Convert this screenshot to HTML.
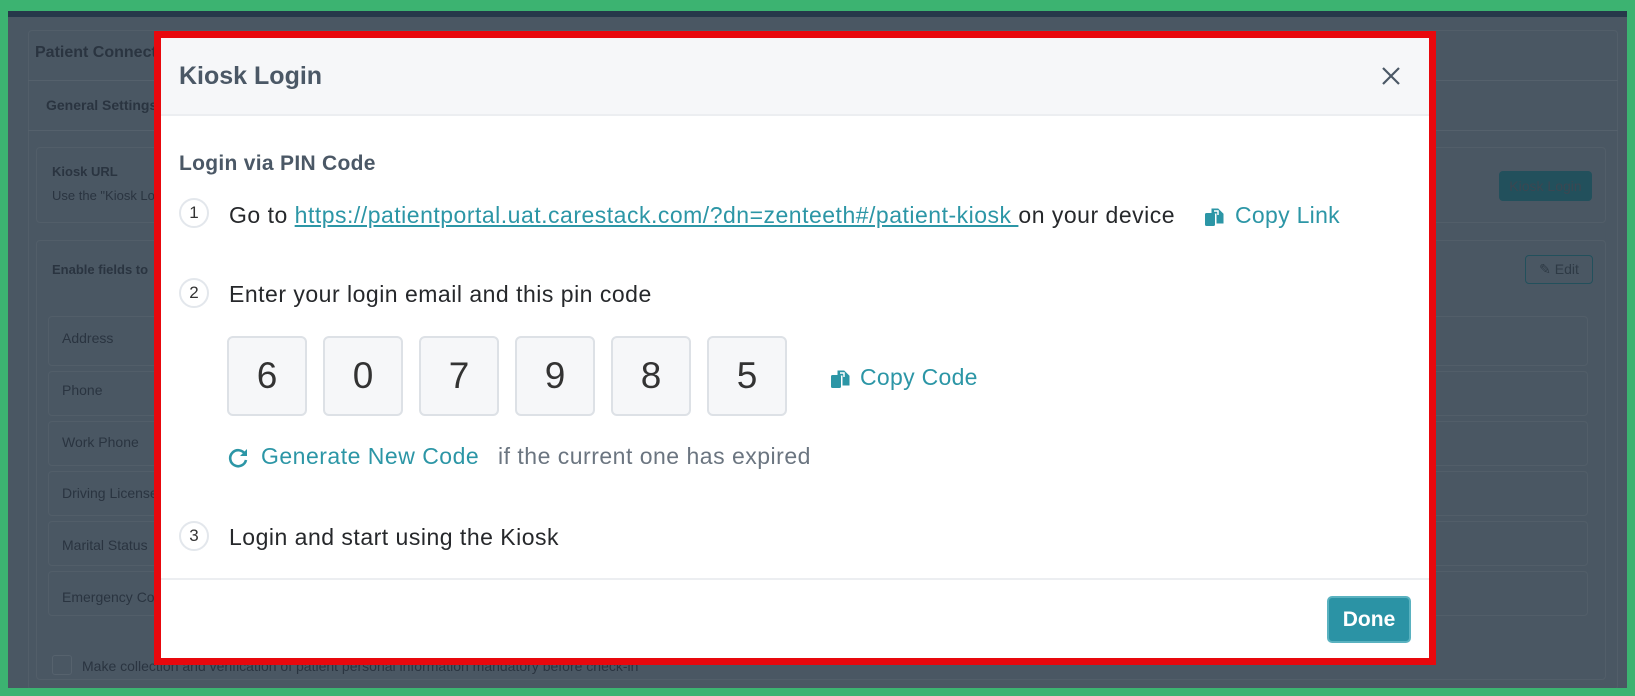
<!DOCTYPE html>
<html><head><style>
*{box-sizing:border-box;margin:0;padding:0}
body{width:1635px;height:696px;overflow:hidden;background:#3cb371;font-family:"Liberation Sans",Arial,sans-serif;position:relative}
.app{position:absolute;left:8px;top:11px;width:1619px;height:677px;background:#4a5763;overflow:hidden}
.nav{position:absolute;left:0;top:0;width:100%;height:6px;background:#27384a}
.bg{position:absolute;color:#2a3440;font-size:14px}
.line{position:absolute;background:#55616c;height:1px}
.card{position:absolute;border:1px solid #525e69;border-radius:4px}
.red{position:absolute;left:154px;top:31px;width:1282px;height:634px;border:7px solid #e8080d;background:#fff}
.hdr{position:absolute;left:0;top:0;right:0;height:78px;background:#f6f7f9;border-bottom:2px solid #eceef1}
.title{position:absolute;left:18px;top:24px;font-size:25px;font-weight:bold;color:#4b5866}
.x{position:absolute;left:1220px;top:28px}
.t{position:absolute;font-size:23px;letter-spacing:0.5px;color:#26282b;white-space:nowrap}
.num{position:absolute;width:30px;height:30px;border:2px solid #e3e7ec;border-radius:50%;font-size:17px;color:#333;text-align:center;line-height:26px}
.pin{position:absolute;top:298px;width:80px;height:80px;border:2px solid #dde1e6;border-radius:6px;background:#f6f7f9;font-size:37px;color:#333;text-align:center;line-height:76px}
.teal{color:#2c96a6}
a{color:#2c96a6}
.done{position:absolute;left:1166px;top:558px;width:84px;height:47px;background:#2b93a5;border:2px solid #5ab2c0;border-radius:5px;color:#fff;font-size:21px;text-align:center;line-height:43px;font-weight:bold}
</style></head><body>
<div class="app">
<div class="nav"></div>
<div class="card" style="left:20px;top:19px;width:1590px;height:660px"></div>
<div class="bg" style="left:27px;top:33px;font-size:16px;font-weight:bold">Patient Connect</div>
<div class="line" style="left:20px;top:69px;width:1590px"></div>
<div class="bg" style="left:38px;top:86px;font-weight:bold">General Settings</div>
<div class="line" style="left:20px;top:119px;width:1590px"></div>
<div class="card" style="left:28px;top:136px;width:1570px;height:76px"></div>
<div class="bg" style="left:44px;top:153px;font-weight:bold;font-size:13px">Kiosk URL</div>
<div class="bg" style="left:44px;top:177px;font-size:13px">Use the "Kiosk Login"</div>
<div style="position:absolute;left:1491px;top:160px;width:93px;height:30px;background:#22505c;border-radius:4px;color:#3b4752;font-size:14px;line-height:30px;text-align:center">Kiosk Login</div>
<div class="card" style="left:28px;top:229px;width:1570px;height:440px"></div>
<div class="bg" style="left:44px;top:251px;font-weight:bold;font-size:13px">Enable fields to</div>
<div style="position:absolute;left:1517px;top:244px;width:68px;height:29px;border:1px solid #22505c;border-radius:4px;color:#2e3a45;font-size:14px;line-height:27px;text-align:center">✎ Edit</div>
<div class="card" style="left:40px;top:305px;width:1540px;height:50px"></div><div class="bg" style="left:54px;top:319px">Address</div>
<div class="card" style="left:40px;top:360px;width:1540px;height:45px"></div><div class="bg" style="left:54px;top:371px">Phone</div>
<div class="card" style="left:40px;top:410px;width:1540px;height:45px"></div><div class="bg" style="left:54px;top:423px">Work Phone</div>
<div class="card" style="left:40px;top:460px;width:1540px;height:45px"></div><div class="bg" style="left:54px;top:474px">Driving License</div>
<div class="card" style="left:40px;top:510px;width:1540px;height:45px"></div><div class="bg" style="left:54px;top:526px">Marital Status</div>
<div class="card" style="left:40px;top:560px;width:1540px;height:45px"></div><div class="bg" style="left:54px;top:578px">Emergency Contact</div>
<div style="position:absolute;left:44px;top:644px;width:20px;height:20px;border:1px solid #56626d;border-radius:3px"></div>
<div class="bg" style="left:74px;top:647px">Make collection and verification of patient personal information mandatory before check-in</div>
</div>

<div class="red">
<div class="hdr"><div class="title">Kiosk Login</div>
<svg class="x" width="20" height="20" viewBox="0 0 20 20"><path d="M2 2L18 18M18 2L2 18" stroke="#4b5866" stroke-width="2.2"/></svg></div>
<div class="t" style="left:18px;top:114px;font-size:21px;letter-spacing:0.3px;font-weight:bold;color:#4b5866">Login via PIN Code</div>

<div class="num" style="left:18px;top:160px">1</div>
<div class="t" style="left:68px;top:164px">Go to <a href="#">https://patientportal.uat.carestack.com/?dn=zenteeth#/patient-kiosk </a>on your device</div>
<svg style="position:absolute;left:1043px;top:168px" width="21" height="21" viewBox="0 0 21 21"><rect x="1" y="7" width="10" height="13" rx="1.5" fill="#2c96a6"/><path d="M8 3h6l5 5v9h-6V7H8z" fill="#2c96a6" stroke="#2c96a6" stroke-width="1"/><path d="M10 5h4v4" fill="none" stroke="#fff" stroke-width="1.5"/></svg>
<div class="t teal" style="left:1074px;top:164px;letter-spacing:0.3px">Copy Link</div>

<div class="num" style="left:18px;top:240px">2</div>
<div class="t" style="left:68px;top:243px">Enter your login email and this pin code</div>
<div class="pin" style="left:66px">6</div>
<div class="pin" style="left:162px">0</div>
<div class="pin" style="left:258px">7</div>
<div class="pin" style="left:354px">9</div>
<div class="pin" style="left:450px">8</div>
<div class="pin" style="left:546px">5</div>
<svg style="position:absolute;left:669px;top:330px" width="21" height="21" viewBox="0 0 21 21"><rect x="1" y="7" width="10" height="13" rx="1.5" fill="#2c96a6"/><path d="M8 3h6l5 5v9h-6V7H8z" fill="#2c96a6" stroke="#2c96a6" stroke-width="1"/><path d="M10 5h4v4" fill="none" stroke="#fff" stroke-width="1.5"/></svg>
<div class="t teal" style="left:699px;top:326px;letter-spacing:0.3px">Copy Code</div>
<svg style="position:absolute;left:67px;top:409px" width="21" height="21" viewBox="0 0 21 21"><path d="M17 7A8 8 0 1 0 18 13" fill="none" stroke="#2c96a6" stroke-width="2.6"/><path d="M19 2v7h-7z" fill="#2c96a6"/></svg>
<div class="t teal" style="left:100px;top:405px">Generate New Code</div>
<div class="t" style="left:337px;top:405px;color:#6b7580">if the current one has expired</div>

<div class="num" style="left:18px;top:483px">3</div>
<div class="t" style="left:68px;top:486px">Login and start using the Kiosk</div>
<div style="position:absolute;left:0;right:0;top:540px;height:2px;background:#eceef1"></div>
<div class="done">Done</div>
</div>
</body></html>
